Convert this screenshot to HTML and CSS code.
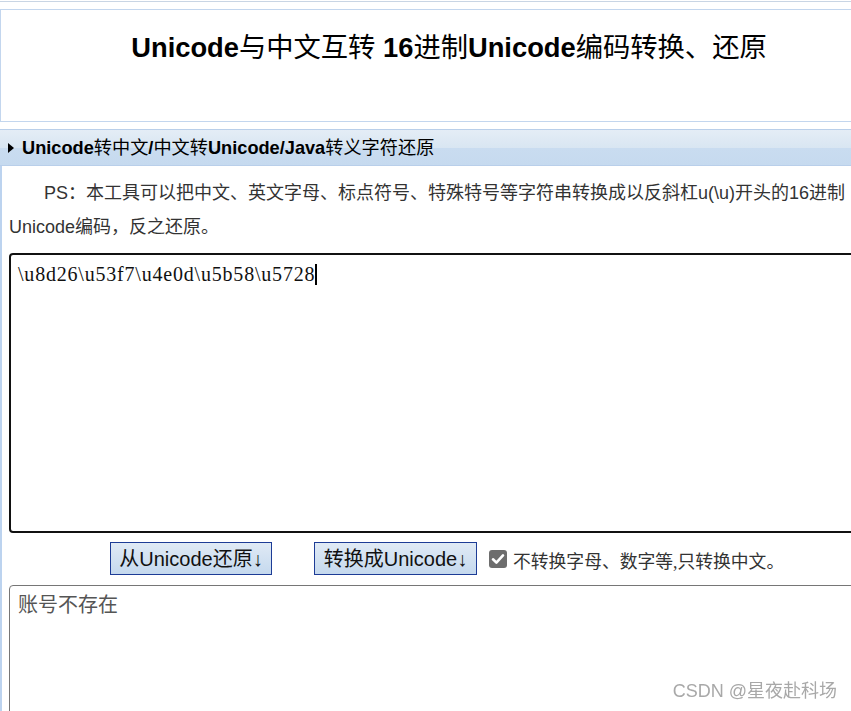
FILE: index.html
```html
<!DOCTYPE html>
<html lang="zh-CN">
<head>
<meta charset="utf-8">
<title>Unicode与中文互转</title>
<link rel="stylesheet" href="styles.css">
</head>
<body>
<div class="page">
  <div class="topline"></div>
  <div class="hero">
    <h1 class="title"><span class="lat">Unicode</span>与中文互转 <span class="lat">16</span>进制<span class="lat">Unicode</span>编码转换、还原</h1>
  </div>
  <div class="panel">
    <div class="bar">
      <span class="tri"></span>
      <h2 class="bar-title"><span class="lat">Unicode</span>转中文<span class="lat">/</span>中文转<span class="lat">Unicode/Java</span>转义字符还原</h2>
    </div>
    <div class="content">
      <p class="intro">PS：本工具可以把中文、英文字母、标点符号、特殊特号等字符串转换成以反斜杠u(\u)开头的16进制Unicode编码，反之还原。</p>
      <div class="editor" role="textbox" aria-multiline="true"><span class="code">\u8d26\u53f7\u4e0d\u5b58\u5728</span><span class="caret"></span></div>
      <div class="actions">
        <button class="btn" type="button">从Unicode还原↓</button>
        <button class="btn btn-second" type="button">转换成Unicode↓</button>
        <label class="check">
          <span class="box"><svg width="18" height="18" viewBox="0 0 18 18"><rect x="0" y="0" width="18" height="18" rx="3" fill="#6d6d6d"/><path d="M4 9.3 L7.4 12.6 L14 5.4" fill="none" stroke="#fff" stroke-width="2.6" stroke-linecap="round" stroke-linejoin="round"/></svg></span>
          <span class="check-text">不转换字母、数字等,只转换中文。</span>
        </label>
      </div>
      <div class="output" role="textbox" aria-multiline="true">账号不存在</div>
    </div>
  </div>
</div>
<div class="watermark">CSDN @星夜赴科场</div>
</body>
</html>
```
FILE: styles.css
```css
html, body {
  margin: 0;
  padding: 0;
  overflow: hidden;
  background: #fff;
}
body {
  font-family: "Liberation Sans", "Noto Sans CJK SC", sans-serif;
  color: #000;
}
.page {
  width: 898px;
}
.topline {
  margin-top: 1px;
  height: 1px;
  background: #c9d5e4;
}
.hero {
  margin-top: 7px;
  height: 111px;
  border: 1px solid #c3d6ee;
}
.title {
  margin: 0;
  padding-top: 19px;
  text-align: center;
  font-size: 27.3px;
  line-height: 38px;
  font-weight: 400;
  color: #000;
}
.lat {
  font-weight: 700;
}
.panel {
  margin-top: 7px;
}
.bar {
  display: flex;
  align-items: center;
  height: 35px;
  padding-left: 8px;
  border-top: 1px solid #b9cfea;
  border-bottom: 1px solid #b9cfea;
  background: linear-gradient(#e4edf6 0%, #d9e6f2 50%, #c9dcf0 52%, #c6daef 100%);
}
.tri {
  width: 0;
  height: 0;
  border-left: 6px solid #000;
  border-top: 5px solid transparent;
  border-bottom: 5px solid transparent;
  margin-right: 8px;
}
.bar-title {
  margin: 0;
  font-size: 18.2px;
  font-weight: 400;
  line-height: 24px;
}
.content {
  border-left: 2px solid #bcd3ef;
  padding: 10px 0 0 7px;
}
.intro {
  margin: 0;
  width: 850px;
  font-size: 18px;
  line-height: 34px;
  text-indent: 35px;
  color: #333;
}
.editor {
  margin-top: 9px;
  width: 880px;
  height: 264px;
  border: 2px solid #111;
  border-radius: 4px 0 0 4px;
  padding: 6px 7px;
  box-sizing: content-box;
  font-family: "Liberation Serif", "Noto Sans CJK SC", serif;
  font-size: 20px;
  line-height: 26px;
  color: #111;
}
.code {
  letter-spacing: 0.8px;
}
.caret {
  display: inline-block;
  width: 2px;
  height: 21px;
  background: #000;
  vertical-align: -4px;
}
.actions {
  display: flex;
  align-items: center;
  margin-top: 9px;
  padding-left: 101px;
  height: 33px;
}
.btn {
  height: 33px;
  width: 162px;
  padding: 2px 0 0;
  border: 1px solid #1d3c96;
  border-radius: 0;
  background: linear-gradient(#e0eaf5, #c5d9ee);
  font-family: "Liberation Sans", "Noto Sans CJK SC", sans-serif;
  font-size: 20px;
  line-height: 29px;
  color: #111;
}
.btn-second {
  width: 163px;
  margin-left: 42px;
}
.check {
  display: flex;
  align-items: center;
  margin-left: 12px;
}
.box {
  display: flex;
  width: 18px;
  height: 18px;
  margin-top: 1px;
}
.check-text {
  margin-left: 6px;
  margin-top: 3px;
  font-size: 17.8px;
  color: #333;
  font-family: "Liberation Serif", "Noto Sans CJK SC", serif;
}
.output {
  margin-top: 10px;
  width: 880px;
  height: 150px;
  border: 1px solid #767676;
  border-radius: 4px 0 0 0;
  padding: 6px 8px;
  font-size: 20px;
  line-height: 26px;
  color: #555;
}
.watermark {
  position: fixed;
  right: 14px;
  bottom: 8px;
  font-size: 18px;
  line-height: 24px;
  color: #a8a8a8;
}
```
